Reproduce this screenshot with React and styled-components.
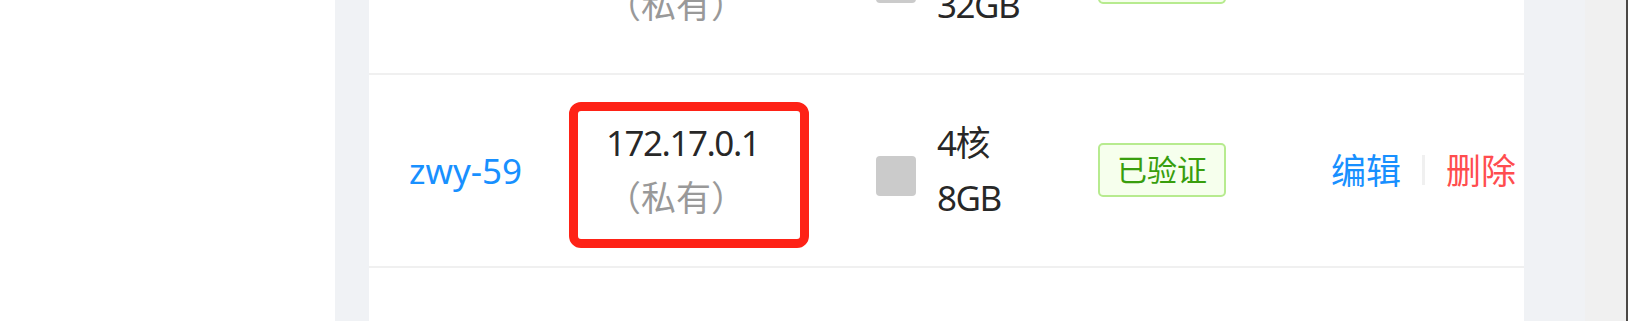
import styled, { createGlobalStyle } from 'styled-components';

const GlobalStyle = createGlobalStyle`
  html, body {
    margin: 0;
    padding: 0;
    background: #fff;
  }
  body {
    font-family: "Noto Sans", "Noto Sans CJK SC", sans-serif;
    color: rgba(0, 0, 0, 0.85);
  }
`;

const Page = styled.div`
  display: flex;
  height: 321px;
  overflow: hidden;
`;

const Blank = styled.div`
  width: 335px;
  flex-shrink: 0;
  background: #fff;
`;

const Gutter = styled.div`
  width: ${(props) => props.width}px;
  flex-shrink: 0;
  background: #f0f2f5;
`;

const ScrollTrack = styled.div`
  width: 41px;
  flex-shrink: 0;
  background: #f0f0f0;
  border-right: 2px solid #4b4846;
`;

const TableWrap = styled.div`
  width: 1155px;
  flex-shrink: 0;
  background: #fff;
  overflow: hidden;
`;

const Rows = styled.div`
  margin-top: -118px;
`;

const Row = styled.div`
  display: grid;
  grid-template-columns: 197px 270px 222px 233px 233px;
  border-bottom: 2px solid #f0f0f0;
  font-size: 35px;
  line-height: 55px;
`;

const Cell = styled.div`
  position: relative;
  display: flex;
  flex-direction: ${(props) => (props.column ? 'column' : 'row')};
  justify-content: ${(props) => (props.column ? 'center' : 'flex-start')};
  align-items: ${(props) => (props.column ? 'flex-start' : 'center')};
  padding: 40px 0 41px 40px;
  white-space: nowrap;
`;

const NameLink = styled.a`
  color: #1890ff;
  text-decoration: none;
`;

const Figure = styled.span`
  letter-spacing: -1.5px;
`;

const Muted = styled.span`
  color: #999;
`;

const Highlight = styled.div`
  position: absolute;
  top: 27px;
  bottom: 18px;
  left: 3px;
  right: 27px;
  border: 9px solid #fe2216;
  border-radius: 12px;
  pointer-events: none;
`;

const Swatch = styled.span`
  width: 40px;
  height: 40px;
  border-radius: 4px;
  background: #cbcbcb;
  flex-shrink: 0;
  margin: 12px 21px 0 0;
`;

const Specs = styled.div`
  display: flex;
  flex-direction: column;
`;

const Tag = styled.span`
  display: inline-block;
  height: 50px;
  line-height: 50px;
  padding: 0 17px;
  font-size: 30px;
  color: #389e0d;
  background: #f6ffed;
  border: 2px solid #b7eb8f;
  border-radius: 5px;
`;

const Action = styled.a`
  color: ${(props) => (props.danger ? '#ff4d4f' : '#1890ff')};
  text-decoration: none;
  cursor: pointer;
`;

const Split = styled.span`
  width: 3px;
  height: 30px;
  margin: 0 21px;
  background: #f0f0f0;
`;

const hosts = [
  { name: 'zwy-58', ip: '172.17.0.2', cpu: '16核', mem: '32GB' },
  { name: 'zwy-59', ip: '172.17.0.1', cpu: '4核', mem: '8GB', marked: true },
];

const App = () => (
  <>
    <GlobalStyle />
    <Page>
      <Blank />
      <Gutter width={34} />
      <TableWrap>
        <Rows>
          {hosts.map((h) => (
            <Row key={h.name}>
              <Cell>
                <NameLink>{h.name}</NameLink>
              </Cell>
              <Cell column>
                <Figure>{h.ip}</Figure>
                <Muted>（私有）</Muted>
                {h.marked && <Highlight />}
              </Cell>
              <Cell>
                <Swatch />
                <Specs>
                  <Figure>{h.cpu}</Figure>
                  <Figure>{h.mem}</Figure>
                </Specs>
              </Cell>
              <Cell>
                <Tag>已验证</Tag>
              </Cell>
              <Cell>
                <Action>编辑</Action>
                <Split />
                <Action danger>删除</Action>
              </Cell>
            </Row>
          ))}
        </Rows>
      </TableWrap>
      <Gutter width={61} />
      <ScrollTrack />
    </Page>
  </>
);

export default App;
